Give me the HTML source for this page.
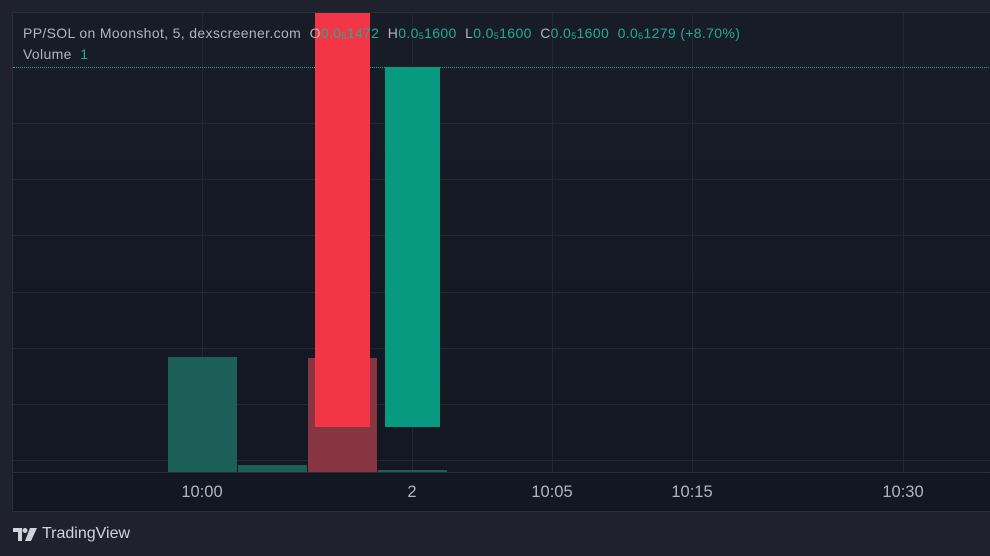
<!DOCTYPE html>
<html><head><style>
*{margin:0;padding:0;box-sizing:border-box}
body{width:990px;height:556px;background:#1f222d;position:relative;overflow:hidden;font-family:"Liberation Sans",sans-serif}
.p{position:absolute}
#chart{left:12px;top:12px;width:990px;height:500px;border:1px solid #2a2e39;background:linear-gradient(#181c27,#131722);overflow:hidden}
.vg{position:absolute;top:0;width:1px;height:459px;background:#232733}
.hg{position:absolute;left:0;height:1px;width:990px;background:#232733}
.t{position:absolute;top:470px;font-size:16.5px;color:#b2b5be;transform:translateX(-50%)}
.lg{position:absolute;left:10px;font-size:14px;letter-spacing:0.35px;color:#b2b5be;white-space:nowrap}
.g{color:#22ab94}
sub{font-size:9px;vertical-align:-1px}
</style></head><body>
<div id="chart" class="p">
  <div class="vg" style="left:189px"></div>
  <div class="vg" style="left:399px"></div>
  <div class="vg" style="left:539px"></div>
  <div class="vg" style="left:679px"></div>
  <div class="vg" style="left:890px"></div>
  <div class="hg" style="top:110px"></div>
  <div class="hg" style="top:166px"></div>
  <div class="hg" style="top:222px"></div>
  <div class="hg" style="top:279px"></div>
  <div class="hg" style="top:335px"></div>
  <div class="hg" style="top:391px"></div>
  <div class="hg" style="top:447px"></div>
  <div class="p" style="left:0;top:54px;width:990px;border-top:1px dotted #22ab94"></div>
  <div class="p" style="left:155px;top:344px;width:69px;height:115px;background:#1b5f58"></div>
  <div class="p" style="left:225px;top:452px;width:69px;height:7px;background:#1b5f58"></div>
  <div class="p" style="left:295px;top:345px;width:69px;height:114px;background:#873541"></div>
  <div class="p" style="left:365px;top:457px;width:69px;height:2px;background:#1b5f58"></div>
  <div class="p" style="left:302px;top:0;width:55px;height:414px;background:#f23645"></div>
  <div class="p" style="left:372px;top:54px;width:55px;height:360px;background:#089981"></div>
  <div class="p" style="left:0;top:459px;width:990px;height:1px;background:#2a2e39"></div>
  <div class="t" style="left:189px">10:00</div>
  <div class="t" style="left:399px">2</div>
  <div class="t" style="left:539px">10:05</div>
  <div class="t" style="left:679px">10:15</div>
  <div class="t" style="left:890px">10:30</div>
  <div class="lg" style="top:12px">PP/SOL on Moonshot, 5, dexscreener.com&nbsp; O<span class="g">0.0<sub>5</sub>1472</span>&nbsp; H<span class="g">0.0<sub>5</sub>1600</span>&nbsp; L<span class="g">0.0<sub>5</sub>1600</span>&nbsp; C<span class="g">0.0<sub>5</sub>1600&nbsp; 0.0<sub>6</sub>1279 (+8.70%)</span></div>
  <div class="lg" style="top:33px">Volume&nbsp; <span class="g">1</span></div>
</div>
<svg class="p" style="left:13px;top:528px" width="25" height="13" viewBox="0 0 25 13"><path fill="#d1d4dc" d="M0 0h9v13H5V4H0z"/><circle cx="12" cy="2.5" r="2.5" fill="#d1d4dc"/><path fill="#d1d4dc" d="M17 0h7l-6 13h-6z"/></svg>
<div class="p" style="left:42px;top:525px;font-size:16px;color:#d1d4dc">TradingView</div>
</body></html>
